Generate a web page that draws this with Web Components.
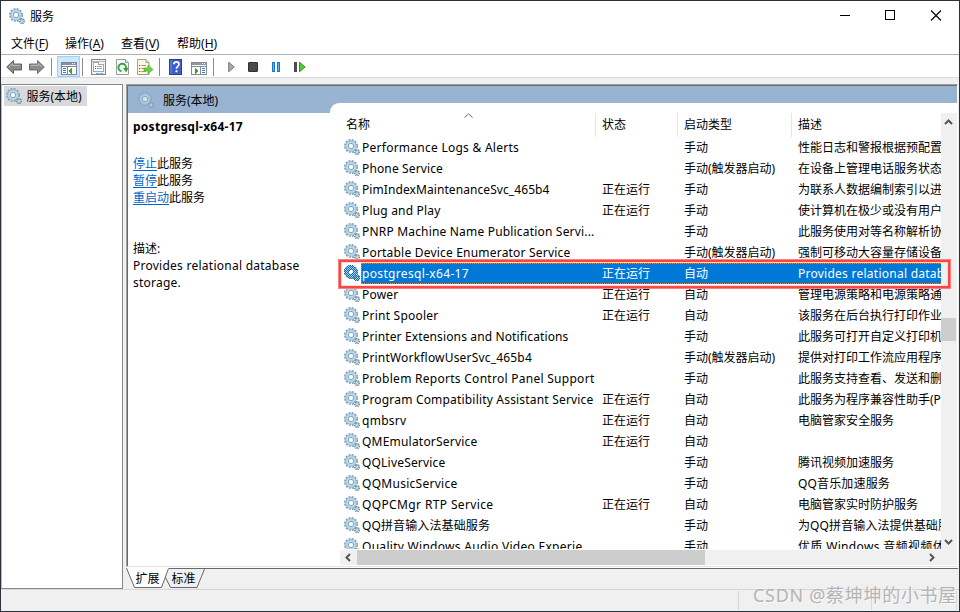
<!DOCTYPE html>
<html lang="zh-CN">
<head>
<meta charset="utf-8">
<title>服务</title>
<style>
  body {
    margin: 0;
    width: 960px;
    height: 612px;
    overflow: hidden;
    background: #2a3040;
    font: 12px/17px "Noto Sans", "Noto Sans CJK SC", sans-serif;
    color: #000;
  }
</style>
</head>
<body>
<mmc-window>
  <mmc-titlebar slot="title">服务</mmc-titlebar>
  <mmc-menubar slot="menu">
    <mmc-menu key="F">文件</mmc-menu>
    <mmc-menu key="A">操作</mmc-menu>
    <mmc-menu key="V">查看</mmc-menu>
    <mmc-menu key="H">帮助</mmc-menu>
  </mmc-menubar>
  <mmc-toolbar slot="toolbar"></mmc-toolbar>
  <mmc-tree slot="tree">服务(本地)</mmc-tree>
  <mmc-pane slot="pane">
    <span slot="heading">服务(本地)</span>
    <svc-detail slot="detail"></svc-detail>
    <svc-list slot="list"></svc-list>
  </mmc-pane>
  <mmc-tabs slot="tabs"></mmc-tabs>
  <mmc-status slot="status"></mmc-status>
</mmc-window>
<page-mark>CSDN @蔡坤坤的小书屋</page-mark>

<script>
/**
 * Attach an open shadow root and fill it from a template string
 */
const define = (name, html, setup) => {
  const template = document.createElement('template');
  template.innerHTML = html;
  customElements.define(name, class extends HTMLElement {
    connectedCallback () {
      if (this.shadowRoot) return;
      const root = this.attachShadow({mode: 'open'});
      root.appendChild(template.content.cloneNode(true));
      if (setup) setup(this, root);
    }
  });
};

// spread the tracking of an element so that its text takes the set width
const fit = (el, width) => {
  const natural = el.getBoundingClientRect().width;
  if (!natural) return;
  el.style.letterSpacing = `${(width - natural) / el.textContent.length}px`;
};

define('gear-icon', `
<style>
  :host { display: block; width: 16px; height: 16px; flex: none; }
  :host([faded]) { opacity: .6; }
  svg { display: block; }
</style>
<svg width="16" height="16" viewBox="0 0 16 16" fill="none">
  <circle cx="7" cy="7" r="6" stroke="#7d9fb5" stroke-width="2" stroke-dasharray="1.9 1.24"/>
  <circle cx="7" cy="7" r="4.1" stroke="#b9d9ec" stroke-width="2.8"/>
  <circle cx="7" cy="7" r="5.3" stroke="#8fb4ca" stroke-width=".7"/>
  <circle cx="7" cy="7" r="2.7" fill="#fff" stroke="#7398b0" stroke-width=".9"/>
  <circle cx="13" cy="13" r="2.4" stroke="#6d8ea2" stroke-width="1.4" stroke-dasharray="1.2 .68"/>
  <circle cx="13" cy="13" r="1.5" fill="#dcebf3" stroke="#91b1c5" stroke-width="1"/>
  <g class="check"></g>
</svg>
`, (el, root) => {
  if (!el.hasAttribute('selected')) return;
  // dithered highlight over the icon of the selected row
  let d = '';
  for (let y = 0; y < 16; y++) {
    for (let x = y % 2; x < 16; x += 2) {
      const big = Math.hypot(x - 6.5, y - 6.5);
      if ((big < 7 && big > 2) || Math.hypot(x - 12.5, y - 12.5) < 3) d += `M${x} ${y}h1v1h-1z`;
    }
  }
  root.querySelector('.check').innerHTML = `<path d="${d}" fill="#0a6fc4" shape-rendering="crispEdges"/>`;
});

// text run with a set width
define('fit-text', `<style>:host { display: inline-block; white-space: nowrap; }</style><slot></slot>`, (el) => {
  const width = Number(el.getAttribute('w'));
  if (width) fit(el, width);
});

define('mmc-window', `
<style>
  :host {
    display: flex;
    flex-direction: column;
    box-sizing: border-box;
    width: 960px;
    height: 612px;
    border: 1px solid #2a3040;
    background: #f0f0f0;
  }
  .body { display: flex; height: 505px; padding-top: 6px; gap: 3px; flex: none; }
  .right { width: 833px; display: flex; flex-direction: column; }
</style>
<slot name="title"></slot>
<slot name="menu"></slot>
<slot name="toolbar"></slot>
<div class="body">
  <slot name="tree"></slot>
  <div class="right">
    <slot name="pane"></slot>
    <slot name="tabs"></slot>
  </div>
</div>
<slot name="status"></slot>
`);

define('mmc-titlebar', `
<style>
  :host { display: flex; align-items: center; height: 29px; background: #fff; flex: none; }
  gear-icon { margin: 0 5px 0 8px; }
  .name { flex: 1; padding-top: 1px; }
  svg { display: block; }
</style>
<gear-icon></gear-icon>
<span class="name"><slot></slot></span>
<svg width="119" height="29" viewBox="0 0 119 29" fill="none" stroke="#000" shape-rendering="crispEdges">
  <path d="M0 14.5H10"/>
  <rect x="45.5" y="9.5" width="9" height="9"/>
  <path d="M91 9.5L101 19.5M101 9.5L91 19.5" shape-rendering="auto" stroke-width="1.1"/>
</svg>
`);

define('mmc-menubar', `
<style>
  :host {
    display: flex;
    align-items: center;
    gap: 16px;
    height: 24px;
    padding-left: 10px;
    background: #fff;
    border-bottom: 1px solid #b0b0b0;
    flex: none;
  }
</style>
<slot></slot>
`);

define('mmc-menu', `
<style>
  :host { display: block; width: 40px; white-space: nowrap; padding-top: 2px; }
  :host(:first-child) { width: 38px; }
  u { text-underline-offset: 2px; text-decoration-thickness: 1px; text-decoration-skip-ink: none; }
</style>
<slot></slot>(<u></u>)
`, (el, root) => {
  root.querySelector('u').textContent = el.getAttribute('key');
});

define('mmc-toolbar', `
<style>
  :host {
    display: flex;
    align-items: center;
    height: 20px;
    background: #fff;
    border-bottom: 1px solid #dadada;
    padding: 2px 0 0 5px;
    flex: none;
  }
  svg { display: block; flex: none; }
  i { width: 1px; height: 18px; background: #8d8d8d; flex: none; }
  .on {
    box-sizing: border-box;
    width: 23px;
    height: 21px;
    padding: 2px 3px;
    background: #cce8ff;
    border: 1px solid #99d1ff;
    margin: 0 2px 0 5px;
    align-self: flex-end;
  }
</style>
<svg width="16" height="16" viewBox="0 0 16 16">
  <path d="M.7 8L7.5 1.5V5H15.5V11H7.5V14.5Z" fill="#8b8b8b" stroke="#555" stroke-width=".9"/>
  <path d="M3 8L6.7 4.6V6.4H14" fill="none" stroke="#bcbcbc"/>
</svg>
<svg width="16" height="16" viewBox="0 0 16 16" style="margin-left:7px">
  <path d="M15.3 8L8.5 1.5V5H.5V11H8.5V14.5Z" fill="#8b8b8b" stroke="#666" stroke-width=".9"/>
  <path d="M13 8L9.3 4.6V6.4H2" fill="none" stroke="#bcbcbc"/>
</svg>
<i style="margin-left:6px"></i>
<div class="on">
  <svg width="16" height="16" viewBox="0 0 16 16" shape-rendering="crispEdges">
    <rect x=".5" y="3.5" width="15" height="12" fill="#fff" stroke="#7b8794"/>
    <path d="M1 5H15" stroke="#8793a0" stroke-width="2"/>
    <path d="M11 4.5H12M13 4.5H14" stroke="#fff"/>
    <path d="M1 7.5H15M6.5 8V15" stroke="#7b8794"/>
    <path d="M2 9.5H5M2 11.5H5M2 13.5H5" stroke="#3b7fc2"/>
    <path d="M11 9V15L7.5 12Z" fill="#3aa535"/>
  </svg>
</div>
<i></i>
<svg width="16" height="16" viewBox="0 0 16 16" style="margin-left:8px" shape-rendering="crispEdges">
  <rect x=".5" y=".5" width="14" height="15" fill="#f5f5f5" stroke="#858585"/>
  <path d="M1 2H14" stroke="#b5b5b5"/>
  <path d="M2.5 12.5V3.5H7.5V5.5H12.5V12.5Z" fill="#fff" stroke="#a6a6a6"/>
  <path d="M4 7.5H5M4 9.5H5" stroke="#2e75b6"/>
  <path d="M6 7.5H11M6 9.5H11" stroke="#a0a0a0"/>
  <path d="M5 14H8M9 14H12" stroke="#52b9e8"/>
</svg>
<svg width="14" height="16" viewBox="0 0 14 16" style="margin-left:9px">
  <path d="M.5.5H9.5L12.5 3.5V15.5H.5Z" fill="#fbfbfb" stroke="#9b9b9b"/>
  <path d="M9.5.5V3.5H12.5" fill="#ddd" stroke="#9b9b9b"/>
  <path d="M5.5 12.3A3.8 3.8 0 1 1 10 9" fill="none" stroke="#35a63a" stroke-width="2"/>
  <path d="M7 9H12.6L10 13.5Z" fill="#35a63a"/>
</svg>
<svg width="17" height="16" viewBox="0 0 17 16" style="margin-left:7px">
  <path d="M.5.5H9L12 3.5V15.5H.5Z" fill="#fdf8df" stroke="#a39e86"/>
  <path d="M9 .5V3.5H12" fill="#eee" stroke="#a39e86"/>
  <path d="M2 6.5H3.3M2 9.5H3.3M2 12.5H3.3" stroke="#555"/>
  <path d="M4.5 6.5H9M4.5 9.5H8M4.5 12.5H9" stroke="#a08f73"/>
  <path d="M7 9H11V6L16 10.5L11 15V12H7Z" fill="#6cd14a" stroke="#48a832" stroke-width=".6"/>
</svg>
<i style="margin-left:5px"></i>
<svg width="14" height="16" viewBox="0 0 14 16" style="margin-left:9px">
  <rect x=".5" y=".5" width="12" height="15" fill="#3b5fc4" stroke="#263f8e"/>
  <path d="M2 1V15" stroke="#7790dd"/>
  <path d="M4.8 5.2C4.8 2 10 2 10 5.2C10 7.3 7.4 7.3 7.4 9.8" fill="none" stroke="#fff" stroke-width="1.7"/>
  <rect x="6.5" y="11.3" width="1.9" height="1.9" fill="#fff"/>
</svg>
<svg width="16" height="16" viewBox="0 0 16 16" style="margin:1px 0 0 8px" shape-rendering="crispEdges">
  <rect x=".5" y="2.5" width="15" height="12" fill="#fff" stroke="#858b92"/>
  <path d="M1 4H15" stroke="#8f969e" stroke-width="2"/>
  <path d="M11 3.5H12M13 3.5H14" stroke="#fff"/>
  <path d="M1 6.5H15M9.5 7V14" stroke="#858b92"/>
  <path d="M11 8.5H14M11 10.5H14M11 12.5H14" stroke="#3b7fc2"/>
  <path d="M4 8V14L8 11Z" fill="#3aa535"/>
</svg>
<i style="margin-left:6px"></i>
<svg width="8" height="12" viewBox="0 0 8 12" style="margin-left:14px">
  <path d="M.7 1.2L6.3 6L.7 10.8Z" fill="#aaa" stroke="#7c7c7c"/>
</svg>
<svg width="10" height="10" viewBox="0 0 10 10" style="margin-left:12px">
  <rect x=".5" y=".5" width="9" height="9" rx=".5" fill="#4b4b4b" stroke="#303030"/>
</svg>
<svg width="8" height="10" viewBox="0 0 8 10" style="margin-left:14px" shape-rendering="crispEdges">
  <path d="M0 0H3V10H0ZM5 0H8V10H5Z" fill="#1979ca"/>
  <path d="M1.5 1V9M6.5 1V9" stroke="#57b0ee"/>
</svg>
<svg width="12" height="12" viewBox="0 0 12 12" style="margin-left:14px">
  <path d="M0 1H3V11H0Z" fill="#4c4c4c"/>
  <path d="M5.5 1.2L11 6L5.5 10.8Z" fill="#55c92f" stroke="#28961b"/>
</svg>
`);

define('mmc-tree', `
<style>
  :host {
    display: block;
    box-sizing: border-box;
    width: 122px;
    height: 505px;
    background: #fff;
    border: 1px solid #828790;
    border-left-color: #b9bcc2;
    padding: 1px 0 0 2px;
    flex: none;
  }
  .node { display: flex; align-items: center; width: 83px; height: 20px; background: #d9d9d9; }
  gear-icon { margin: 0 4.5px 0 2px; }
  span { white-space: nowrap; }
</style>
<div class="node"><gear-icon></gear-icon><span><slot></slot></span></div>
`);

define('mmc-pane', `
<style>
  :host {
    display: block;
    box-sizing: border-box;
    width: 832px;
    height: 483px;
    background: #fff;
    border: 1px solid #a0a0a0;
    border-right-color: #fff;
    border-bottom-color: #e3e3e3;
    flex: none;
  }
  .inner { box-sizing: border-box; height: 481px; border: 1px solid #696969; border-width: 1px 0 0 1px; }
  header { display: flex; align-items: center; height: 27px; background: #99b4d1; }
  gear-icon { margin: 0 9px 0 10px; }
  header span { padding-top: 1px; }
  .cols { display: flex; margin-top: -10px; }
  .detail { width: 202px; padding-top: 10px; flex: none; }
  .list { flex: 1; min-width: 0; background: #fff; border-top-left-radius: 9px; padding: 10px 0 0 10px; }
</style>
<div class="inner">
  <header><gear-icon faded></gear-icon><span><slot name="heading"></slot></span></header>
  <div class="cols">
    <div class="detail"><slot name="detail"></slot></div>
    <div class="list"><slot name="list"></slot></div>
  </div>
</div>
`);

define('svc-detail', `
<style>
  :host { display: block; padding: 5px 0 0 5px; }
  h1 { font-size: 12px; line-height: 17px; margin: 0 0 20px; }
  h1, p { height: 17px; }
  p { margin: 0; white-space: nowrap; }
  a { color: #0066cc; text-decoration: underline; text-underline-offset: 2px; text-decoration-skip-ink: none; }
  .desc { margin-top: 34px; }
</style>
<h1><fit-text w="110">postgresql-x64-17</fit-text></h1>
<p><a>停止</a>此服务</p>
<p><a>暂停</a>此服务</p>
<p><a>重启动</a>此服务</p>
<p class="desc">描述:</p>
<p><fit-text w="166.5">Provides relational database</fit-text></p>
<p><fit-text w="48">storage.</fit-text></p>
`);

define('svc-row', `
<style>
  :host {
    display: grid;
    grid-template-columns: 21px 241px 82px 114px 143px;
    height: 21px;
    line-height: 21px;
    white-space: nowrap;
    overflow: hidden;
  }
  gear-icon { margin: 2px 0 0 4px; }
  .cell { height: 21px; overflow: hidden; }
  .first { padding-left: 1px; }
  :host([selected]) .cell {
    color: #fff;
    background:
      repeating-linear-gradient(90deg, #e08b3c 0 1px, #0078d7 1px 2px) 0 0 / 100% 1px no-repeat,
      repeating-linear-gradient(90deg, #e08b3c 0 1px, #0078d7 1px 2px) 0 100% / 100% 1px no-repeat,
      #0078d7;
  }
  :host([selected]) .first { border-left: 1px dotted #e08b3c; padding-left: 0; }
</style>
<gear-icon></gear-icon>
<div class="cell first"><slot name="name"></slot></div>
<div class="cell"><slot name="state"></slot></div>
<div class="cell"><slot name="start"></slot></div>
<div class="cell"><slot name="desc"></slot></div>
`, (el, root) => {
  if (el.hasAttribute('selected')) {
    const icon = document.createElement('gear-icon');
    icon.setAttribute('selected', '');
    root.querySelector('gear-icon').replaceWith(icon);
  }
});

// name, name width, running, start type, description, description width
const services = [
  ['Performance Logs & Alerts', 157, 0, '手动', '性能日志和警报根据预配置'],
  ['Phone Service', 81, 0, '手动(触发器启动)', '在设备上管理电话服务状态'],
  ['PimIndexMaintenanceSvc_465b4', 187.5, 1, '手动', '为联系人数据编制索引以进'],
  ['Plug and Play', 78.5, 1, '手动', '使计算机在极少或没有用户'],
  ['PNRP Machine Name Publication Servi...', 232.5, 0, '手动', '此服务使用对等名称解析协'],
  ['Portable Device Enumerator Service', 208.5, 0, '手动(触发器启动)', '强制可移动大容量存储设备'],
  ['postgresql-x64-17', 107, 1, '自动', 'Provides relational database', 166.5],
  ['Power', 36.5, 1, '自动', '管理电源策略和电源策略通'],
  ['Print Spooler', 76.5, 1, '自动', '该服务在后台执行打印作业'],
  ['Printer Extensions and Notifications', 206.5, 0, '手动', '此服务可打开自定义打印机'],
  ['PrintWorkflowUserSvc_465b4', 170, 0, '手动(触发器启动)', '提供对打印工作流应用程序'],
  ['Problem Reports Control Panel Support', 232.5, 0, '手动', '此服务支持查看、发送和删'],
  ['Program Compatibility Assistant Service', 231.5, 1, '自动', '此服务为程序兼容性助手(P'],
  ['qmbsrv', 44.5, 1, '自动', '电脑管家安全服务'],
  ['QMEmulatorService', 115.5, 1, '自动', ''],
  ['QQLiveService', 83.5, 0, '手动', '腾讯视频加速服务'],
  ['QQMusicService', 95.5, 0, '手动', 'QQ音乐加速服务', 92],
  ['QQPCMgr RTP Service', 131.5, 1, '自动', '电脑管家实时防护服务'],
  ['QQ拼音输入法基础服务', 128, 0, '手动', '为QQ拼音输入法提供基础服', 152],
  ['Quality Windows Audio Video Experie', 220.5, 0, '手动', '优质 Windows 音频视频体', 147]
];

define('svc-list', `
<style>
  :host { display: grid; grid-template-columns: 601px 16px; grid-template-rows: 437px 15px; }
  .view { overflow: hidden; height: 436px; }
  .head { display: flex; position: relative; height: 24px; line-height: 24px; }
  .head span { box-sizing: border-box; border-right: 1px solid #e5e5e5; padding-left: 6px; }
  .head span:last-of-type { border: 0; }
  .sort { position: absolute; left: 124px; top: 0; }
  .rows { width: 601px; }
  .mark {
    position: absolute;
    left: 338px;
    top: 259px;
    width: 607px;
    height: 24px;
    border: 3px solid #fc4545;
    box-shadow: inset 0 0 0 1px rgba(255, 190, 190, .55);
    outline: 1px solid rgba(252, 160, 160, .65);
    outline-offset: -1px;
  }
  .v { background: #f0f0f0; display: flex; flex-direction: column; align-items: center; }
  .v i { width: 15px; height: 23px; background: #cdcdcd; margin: 187px 1px 0 0; }
  .v svg:last-child { margin-top: auto; }
  .h { grid-column: 1 / 3; background: #f0f0f0; display: flex; align-items: center; }
  .h i { width: 348px; height: 15px; background: #cdcdcd; }
  svg { display: block; flex: none; }
</style>
<div class="view">
  <div class="head">
    <span style="width:256px">名称</span>
    <span style="width:82px">状态</span>
    <span style="width:114px">启动类型</span>
    <span>描述</span>
    <svg class="sort" width="9" height="5" viewBox="0 0 9 5" fill="none"><path d="M.5 4.5L4.5 .8L8.5 4.5" stroke="#666"/></svg>
  </div>
  <div class="rows"></div>
</div>
<div class="v">
  <svg width="16" height="18" viewBox="0 0 16 18"><path d="M4 11L7.5 7.5L11 11" fill="none" stroke="#555" stroke-width="2"/></svg>
  <i></i>
  <svg width="16" height="18" viewBox="0 0 16 18"><path d="M4 8L7.5 11.5L11 8" fill="none" stroke="#555" stroke-width="2"/></svg>
</div>
<div class="h">
  <svg width="17" height="15" viewBox="0 0 17 15"><path d="M10 4L6.5 7.5L10 11" fill="none" stroke="#555" stroke-width="2"/></svg>
  <i></i>
  <svg width="17" height="15" viewBox="0 0 17 15" style="margin-left:218px"><path d="M7 4L10.5 7.5L7 11" fill="none" stroke="#555" stroke-width="2"/></svg>
</div>
<div class="mark"></div>
`, (el, root) => {
  const esc = (s) => s.replace(/&/g, '&amp;');
  root.querySelector('.rows').innerHTML = services.map(([name, w, running, start, desc, dw]) => `
    <svc-row ${name.startsWith('postgresql') ? 'selected' : ''}>
      <fit-text slot="name" w="${w}">${esc(name)}</fit-text>
      <span slot="state">${running ? '正在运行' : ''}</span>
      <span slot="start">${start}</span>
      <fit-text slot="desc" w="${dw || ''}">${desc}</fit-text>
    </svc-row>`).join('');
});

define('mmc-tabs', `
<style>
  :host { display: block; width: 833px; height: 22px; position: relative; }
  svg { display: block; }
  .labels { position: absolute; left: 9.5px; top: 3px; display: flex; gap: 12px; }
</style>
<svg width="833" height="22" viewBox="0 0 833 22">
  <path d="M0 0H833V1H0Z" fill="#fff"/>
  <path d="M41 1.5H832" stroke="#696969"/>
  <path d="M42 2L37 11L45 20.5H71L78 2Z" fill="#f0f0f0"/>
  <path d="M.5 1L8.5 20.5H35.5L43 1Z" fill="#fff"/>
  <path d="M.5 1L8.5 20.5H35.5L42.5 1.5" fill="none" stroke="#696969"/>
  <path d="M39.5 10.5L44.5 20.5H71L78.5 2" fill="none" stroke="#696969"/>
</svg>
<div class="labels"><span>扩展</span><span>标准</span></div>
`);

define('mmc-status', `
<style>
  :host { display: flex; height: 21px; border-top: 1px solid #d7d7d7; }
  i { width: 1px; height: 19px; margin-top: 1px; background: #d7d7d7; }
  i:first-of-type { margin-left: 737px; }
  i + i { margin-left: 132px; }
  i + i + i { margin-left: 84px; }
</style>
<i></i><i></i><i></i>
`);

define('page-mark', `
<style>
  :host {
    position: absolute;
    left: 753px;
    top: 582px;
    font: 18px/26px "Noto Sans", "Noto Sans CJK SC", sans-serif;
    color: #b4b4b4;
    text-shadow: 1px 1px 0 #fafafa;
    white-space: nowrap;
  }
</style>
<slot></slot>
`, (el) => fit(el, 204));
</script>
</body>
</html>
